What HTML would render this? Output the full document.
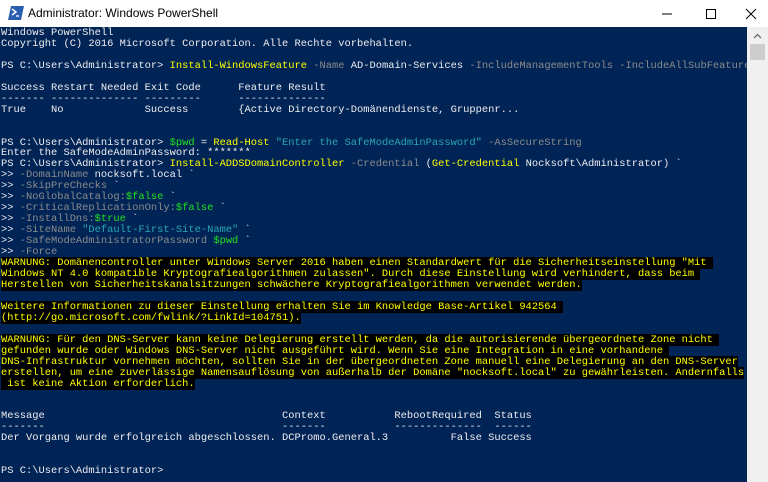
<!DOCTYPE html>
<html><head><meta charset="utf-8"><style>
body{margin:0;width:768px;height:482px;overflow:hidden;background:#fff;font-family:"Liberation Sans",sans-serif}
#title{position:absolute;left:0;top:0;width:768px;height:27px;background:#fff}
#title .t{position:absolute;left:28px;top:6px;font-size:12px;color:#000}
#con{position:absolute;left:0;top:27px;width:747px;height:455px;background:#012456;overflow:hidden}
pre{margin:0;position:absolute;left:1px;top:1px;font-family:"Liberation Mono",monospace;font-size:10.42px;line-height:10.95px;color:#eeedf0;white-space:pre}
.y{color:#ffff00}.g{color:#8c8c8c}.c{color:#2aa6b8}.v{color:#21e021}
.w{color:#ffff00;background:#000}
#sb{position:absolute;left:747px;top:27px;width:21px;height:455px;background:#f0f0f0}
</style></head><body>
<div id="title">
<svg style="position:absolute;left:8px;top:6px" width="16" height="14" viewBox="0 0 16 14"><polygon points="3,0 16,0 13,14 0,14" fill="#2a5fb0"/><polyline points="4,3 8,6 4,9" stroke="#fff" stroke-width="1.5" fill="none"/><line x1="8" y1="10" x2="11" y2="10" stroke="#fff" stroke-width="1.3"/></svg>
<span class="t">Administrator: Windows PowerShell</span>
<svg style="position:absolute;left:660px;top:8px" width="100" height="12"><line x1="2" y1="6" x2="12" y2="6" stroke="#000"/><rect x="46.5" y="1.5" width="9" height="9" fill="none" stroke="#000"/><path d="M86 1L96 11M96 1L86 11" stroke="#000"/></svg>
</div>
<div id="con"><pre>Windows PowerShell
Copyright (C) 2016 Microsoft Corporation. Alle Rechte vorbehalten.

PS C:\Users\Administrator&gt; <span class="y">Install-WindowsFeature</span> <span class="g">-Name</span> AD-Domain-Services <span class="g">-IncludeManagementTools -IncludeAllSubFeature</span>

Success Restart Needed Exit Code      Feature Result
------- -------------- ---------      --------------
True    No             Success        {Active Directory-Domänendienste, Gruppenr...


PS C:\Users\Administrator&gt; <span class="v">$pwd</span> = <span class="y">Read-Host</span> <span class="c">"Enter the SafeModeAdminPassword"</span> <span class="g">-AsSecureString</span>
Enter the SafeModeAdminPassword: *******
PS C:\Users\Administrator&gt; <span class="y">Install-ADDSDomainController</span> <span class="g">-Credential</span> (<span class="y">Get-Credential</span> Nocksoft\Administrator) `
&gt;&gt; <span class="g">-DomainName</span> nocksoft.local `
&gt;&gt; <span class="g">-SkipPreChecks</span> `
&gt;&gt; <span class="g">-NoGlobalCatalog:</span><span class="v">$false</span> `
&gt;&gt; <span class="g">-CriticalReplicationOnly:</span><span class="v">$false</span> `
&gt;&gt; <span class="g">-InstallDns:</span><span class="v">$true</span> `
&gt;&gt; <span class="g">-SiteName</span> <span class="c">"Default-First-Site-Name"</span> `
&gt;&gt; <span class="g">-SafeModeAdministratorPassword</span> <span class="v">$pwd</span> `
&gt;&gt; <span class="g">-Force</span>
<span class="w">WARNUNG: Domänencontroller unter Windows Server 2016 haben einen Standardwert für die Sicherheitseinstellung "Mit </span>
<span class="w">Windows NT 4.0 kompatible Kryptografiealgorithmen zulassen". Durch diese Einstellung wird verhindert, dass beim </span>
<span class="w">Herstellen von Sicherheitskanalsitzungen schwächere Kryptografiealgorithmen verwendet werden.</span>

<span class="w">Weitere Informationen zu dieser Einstellung erhalten Sie im Knowledge Base-Artikel 942564 </span>
<span class="w">(http://go.microsoft.com/fwlink/?LinkId=104751).</span>

<span class="w">WARNUNG: Für den DNS-Server kann keine Delegierung erstellt werden, da die autorisierende übergeordnete Zone nicht </span>
<span class="w">gefunden wurde oder Windows DNS-Server nicht ausgeführt wird. Wenn Sie eine Integration in eine vorhandene </span>
<span class="w">DNS-Infrastruktur vornehmen möchten, sollten Sie in der übergeordneten Zone manuell eine Delegierung an den DNS-Server</span>
<span class="w">erstellen, um eine zuverlässige Namensauflösung von außerhalb der Domäne "nocksoft.local" zu gewährleisten. Andernfalls</span>
<span class="w"> ist keine Aktion erforderlich.</span>


Message                                      Context           RebootRequired  Status
-------                                      -------           --------------  ------
Der Vorgang wurde erfolgreich abgeschlossen. DCPromo.General.3          False Success


PS C:\Users\Administrator&gt;</pre></div>
<div id="sb">
<svg style="position:absolute;left:6px;top:6px" width="9" height="6"><polyline points="1,5 4.5,1.5 8,5" stroke="#606060" fill="none" stroke-width="1.2"/></svg>
<div style="position:absolute;left:3px;top:17px;width:15px;height:16px;background:#cdcdcd"></div>
</div>
</body></html>
